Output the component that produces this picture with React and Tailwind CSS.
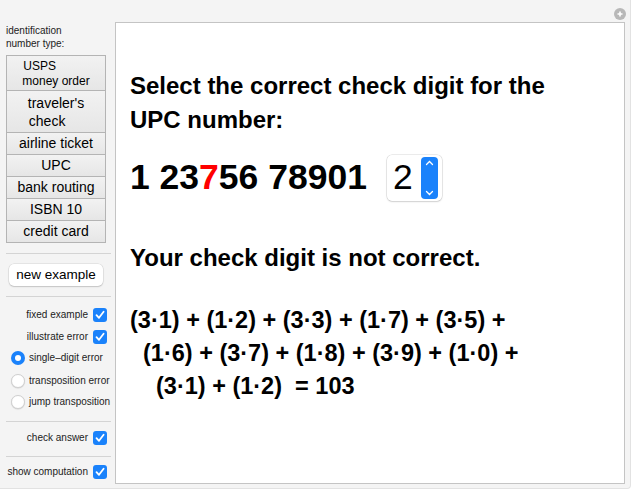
import React from "react";

const F = { fontFamily: '"Liberation Sans", Arial, sans-serif' };

function Check() {
  return (
    <span className="inline-flex w-[14px] h-[14px] rounded-[3px] bg-[#1a82fb] items-center justify-center">
      <svg width="10" height="10" viewBox="0 0 10 10">
        <path d="M1.5 5.2 L4 7.8 L8.6 1.8" stroke="white" strokeWidth="1.8" fill="none" strokeLinecap="round" strokeLinejoin="round" />
      </svg>
    </span>
  );
}

function Radio({ on }) {
  return on ? (
    <span className="inline-flex w-[14px] h-[14px] rounded-full bg-[#1a82fb] items-center justify-center">
      <span className="w-[6px] h-[6px] rounded-full bg-white" />
    </span>
  ) : (
    <span className="inline-block w-[14px] h-[14px] rounded-full bg-white border border-[#d0d0d0] shadow-[0_0.5px_1px_rgba(0,0,0,0.15)]" />
  );
}

function Btn({ children, h, cls = "" }) {
  return (
    <div
      className={`flex items-center justify-center border-b border-[#b4b4b4] bg-gradient-to-b from-[#f2f2f2] to-[#e6e6e6] text-[14px] text-black ${cls}`}
      style={{ height: h }}
    >
      {children}
    </div>
  );
}

function Sep() {
  return <div className="h-px bg-[#d4d4d4] w-[105px] ml-[6px]" />;
}

function CheckRow({ label, cls = "" }) {
  return (
    <div className={`flex items-center justify-end h-[14px] leading-[14px] w-[107px] gap-[5px] text-[10px] text-[#222] ${cls}`}>
      <span>{label}</span>
      <Check />
    </div>
  );
}

function RadioRow({ label, on, cls = "" }) {
  return (
    <div className={`flex items-center h-[14px] leading-[14px] gap-[4px] pl-[11px] text-[10px] text-[#222] ${cls}`}>
      <Radio on={on} />
      <span>{label}</span>
    </div>
  );
}

export default function App() {
  return (
    <div className="w-[632px] h-[491px] bg-white relative" style={F}>
      <div className="w-[631px] h-[489px] bg-[#f4f4f4] border-r border-b border-[#e2e2e2] rounded-br-[4px] flex relative">
        {/* left controls */}
        <div className="w-[115px] flex flex-col">
          <div className="text-[10px] leading-[13px] text-[#222] pl-[6px] mt-[24px]">
            identification
            <br />
            number type:
          </div>
          <div className="ml-[6px] mt-[5px] w-[100px] border-x border-t border-[#b4b4b4] flex flex-col">
            <Btn h={35}>
              <span className="text-left text-[12px] leading-[15px] inline-block pt-[2px]">
                <span className="pl-[1px]">USPS</span>
                <br />
                money order
              </span>
            </Btn>
            <Btn h={42}>
              <span className="text-left text-[14px] leading-[18px] inline-block">
                traveler's
                <br />
                <span className="pl-[1px]">check</span>
              </span>
            </Btn>
            <Btn h={22}>airline ticket</Btn>
            <Btn h={22}>UPC</Btn>
            <Btn h={22}>bank routing</Btn>
            <Btn h={22}>ISBN 10</Btn>
            <Btn h={22}>credit card</Btn>
          </div>
          <div className="mt-[10px]">
            <Sep />
          </div>
          <div className="ml-[9px] mt-[10px] w-[94px] h-[22px] bg-white rounded-[5px] shadow-[0_0_0_0.5px_rgba(0,0,0,0.12),0_1px_1.5px_rgba(0,0,0,0.15)] flex items-center justify-center text-[13.5px] text-black">
            new example
          </div>
          <div className="mt-[10px]">
            <Sep />
          </div>
          <CheckRow label="fixed example" cls="mt-[11px]" />
          <CheckRow label="illustrate error" cls="mt-[8px]" />
          <RadioRow label="single–digit error" on cls="mt-[7px]" />
          <RadioRow label="transposition error" cls="mt-[9px]" />
          <RadioRow label="jump transposition" cls="mt-[7px]" />
          <div className="mt-[12px]">
            <Sep />
          </div>
          <CheckRow label="check answer" cls="mt-[9px]" />
          <div className="mt-[11px]">
            <Sep />
          </div>
          <CheckRow label="show computation" cls="mt-[8px]" />
        </div>

        {/* main panel */}
        <div className="mt-[22px] w-[510px] h-[462px] bg-white border border-[#c4c4c4] pl-[14px] text-black">
          <div className="mt-[46px] text-[24px] leading-[34px] font-bold">
            Select the correct check digit for the
            <br />
            UPC number:
          </div>
          <div className="mt-[18px] flex items-center h-[46px]">
            <span className="text-[35.5px] font-bold leading-none">
              1 23<span className="text-[#ff0000]">7</span>56 78901
            </span>
            <div className="ml-[20px] w-[55px] h-[46px] bg-white rounded-[5px] shadow-[0_0_0_0.5px_rgba(0,0,0,0.15),0_1px_2px_rgba(0,0,0,0.12)] flex items-center">
              <span className="text-[35.5px] leading-none ml-[6px] w-[28px]">2</span>
              <div className="w-[17px] h-[42px] rounded-[4px] bg-[#1a82fb] flex flex-col items-center justify-between py-[3px]">
                <svg width="9" height="6" viewBox="0 0 9 6">
                  <path d="M1.5 4.5 L4.5 1.5 L7.5 4.5" stroke="white" strokeWidth="1.3" fill="none" strokeLinecap="round" />
                </svg>
                <svg width="9" height="6" viewBox="0 0 9 6">
                  <path d="M1.5 1.5 L4.5 4.5 L7.5 1.5" stroke="white" strokeWidth="1.3" fill="none" strokeLinecap="round" />
                </svg>
              </div>
            </div>
          </div>
          <div className="mt-[40px] text-[24px] leading-[34px] font-bold">
            Your check digit is not correct.
          </div>
          <div className="mt-[29px] text-[23.5px] leading-[33px] font-bold">
            <div>(3·1) + (1·2) + (3·3) + (1·7) + (3·5) +</div>
            <div className="pl-[13px]">(1·6) + (3·7) + (1·8) + (3·9) + (1·0) +</div>
            <div className="pl-[26px]">(3·1) + (1·2)&nbsp; = 103</div>
          </div>
        </div>

        {/* plus icon */}
        <div className="absolute left-[614px] top-[8px] w-[12px] h-[12px] rounded-full bg-[#b8b8b8] flex items-center justify-center">
          <svg width="8" height="8" viewBox="0 0 8 8">
            <path d="M4 1.5 V6.5 M1.5 4 H6.5" stroke="white" strokeWidth="1.6" />
          </svg>
        </div>
      </div>
    </div>
  );
}
